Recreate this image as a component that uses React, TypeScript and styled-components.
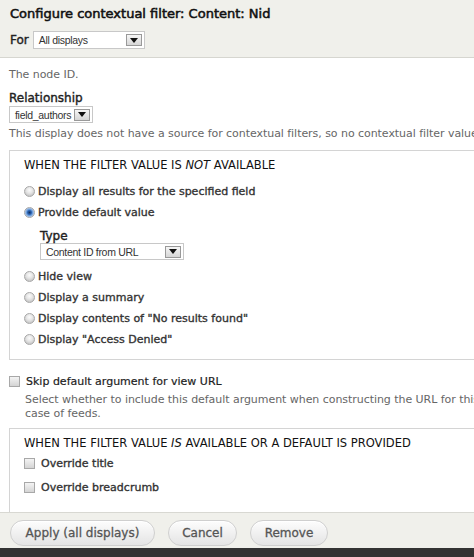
import React from 'react';
import styled, { createGlobalStyle } from 'styled-components';

const GlobalStyle = createGlobalStyle`
  html, body { margin: 0; padding: 0; background: #fff; }
  body { font-family: "DejaVu Sans", Verdana, sans-serif; color: #333; }
`;

// Lucida-style bold: thicken the strokes without widening the letters
const heavy = (w: number) => `-webkit-text-stroke: ${w}px currentColor;`;

const Page = styled.div`
  width: 474px;
  height: 557px;
  display: flex;
  flex-direction: column;
  overflow: hidden;
`;

const Header = styled.div`
  background: #f0f0eb;
  border-bottom: 1px solid #d6d6d0;
  padding: 6px 10px 0;
  height: 51px;
`;

const Title = styled.h1`
  margin: 0;
  font-size: 13px;
  line-height: 16px;
  font-weight: normal;
  ${heavy(0.55)}
  color: #111;
  white-space: nowrap;
`;

const ForRow = styled.div`
  display: flex;
  align-items: center;
  gap: 4px;
  margin-top: 9px;
  font-size: 12px;
  ${heavy(0.4)}
  color: #222;
`;

const Content = styled.div`
  flex: 1;
  overflow: hidden;
  padding: 10px 0 0 9px;
  white-space: nowrap;
`;

const Description = styled.div<{ indent?: number; mt?: number }>`
  font-size: 11px;
  color: #666;
  line-height: 14px;
  padding-left: ${p => p.indent || 0}px;
  margin-top: ${p => p.mt || 0}px;
  letter-spacing: -0.05px;
`;

const FieldLabel = styled.div`
  font-size: 12px;
  ${heavy(0.4)}
  color: #222;
  margin: 9px 0 1px;
  line-height: 14px;
`;

const SelectBox = styled.div<{ w: number; h: number }>`
  width: ${p => p.w}px;
  height: ${p => p.h}px;
  box-sizing: border-box;
  background: #fff;
  border: 1px solid #c8c8c8;
  display: flex;
  align-items: center;
  justify-content: space-between;
  padding: 0 2px 0 5px;
  font-family: "Liberation Sans", Arial, sans-serif;
  font-size: 10.5px;
  color: #333;
  letter-spacing: -0.3px;
  -webkit-text-stroke: 0;
`;

const SelectArrow = styled.span`
  width: 16px;
  height: 12px;
  box-sizing: border-box;
  border: 1px solid #999;
  background: linear-gradient(#f6f6f6, #d6d6d6);
  display: flex;
  align-items: center;
  justify-content: center;
  &::after {
    content: "";
    border-left: 4px solid transparent;
    border-right: 4px solid transparent;
    border-top: 5px solid #111;
  }
`;

function Select({ value, width, height = 17 }: { value: string; width: number; height?: number }) {
  return (
    <SelectBox w={width} h={height}>
      <span>{value}</span>
      <SelectArrow />
    </SelectBox>
  );
}

const Fieldset = styled.div<{ pb: number; mt: number }>`
  border: 1px solid #d4d4d4;
  border-right: none;
  padding: 6px 0 ${p => p.pb}px 14px;
  margin-top: ${p => p.mt}px;
`;

const Legend = styled.div<{ mb: number }>`
  font-size: 11.5px;
  color: #111;
  line-height: 16px;
  margin-bottom: ${p => p.mb}px;
  em { font-style: italic; }
`;

const OptionRow = styled.label<{ h?: number }>`
  display: flex;
  align-items: center;
  gap: 3px;
  height: ${p => p.h || 21}px;
  font-size: 11px;
  ${heavy(0.35)}
  color: #333;
`;

const Radio = styled.span<{ checked?: boolean }>`
  width: 11px;
  height: 11px;
  border-radius: 50%;
  box-sizing: border-box;
  border: 1px solid #a8a8a8;
  -webkit-text-stroke: 0;
  background: ${p =>
    p.checked
      ? 'radial-gradient(circle at 50% 50%, #10305e 0, #2c64b4 2px, #6a9bd8 3px, #c7d7ee 5px)'
      : 'radial-gradient(circle at 50% 35%, #fbfbfb 0, #e6e6e6 3px, #c4c4c4 6px)'};
`;

const Check = styled.span`
  width: 11px;
  height: 11px;
  box-sizing: border-box;
  border: 1px solid #a8a8a8;
  background: linear-gradient(#f4f4f4, #d4d4d4);
  margin-right: 3px;
`;

const TypeBlock = styled.div`
  padding-left: 16px;
  margin: 6px 0 6px;
`;

const TypeLabel = styled.div`
  font-size: 12px;
  ${heavy(0.4)}
  color: #222;
  line-height: 14px;
`;

const SkipRow = styled.label`
  display: flex;
  align-items: center;
  gap: 3px;
  height: 20px;
  margin-top: 11px;
  font-size: 11px;
  ${heavy(0.2)}
  color: #222;
`;

const Footer = styled.div`
  background: #f0f0eb;
  border-top: 1px solid #d8d8d2;
  height: 36px;
  display: flex;
  align-items: flex-start;
  gap: 13px;
  padding: 7px 0 0 10px;
  box-sizing: border-box;
`;

const Button = styled.button<{ w: number }>`
  width: ${p => p.w}px;
  height: 26px;
  border-radius: 13px;
  border: 1px solid #cfcfcf;
  background: linear-gradient(#fdfdfd, #e4e4e4);
  font-family: "DejaVu Sans", Verdana, sans-serif;
  font-size: 12px;
  ${heavy(0.3)}
  color: #555;
  padding: 0;
  box-shadow: inset 0 1px 0 #fff;
`;

const DarkBar = styled.div`
  height: 9px;
  background: #333;
`;

const firstOptions = [
  'Display all results for the specified field',
  'Provide default value',
];

const restOptions = [
  'Hide view',
  'Display a summary',
  'Display contents of "No results found"',
  'Display "Access Denied"',
];

export default function App() {
  return (
    <Page>
      <GlobalStyle />
      <Header>
        <Title>Configure contextual filter: Content: Nid</Title>
        <ForRow>
          For
          <Select value="All displays" width={112} height={18} />
        </ForRow>
      </Header>
      <Content>
        <Description>The node ID.</Description>
        <FieldLabel>Relationship</FieldLabel>
        <Select value="field_authors" width={84} />
        <Description mt={4}>
          This display does not have a source for contextual filters, so no contextual filter value will be available
        </Description>

        <Fieldset pb={9} mt={9}>
          <Legend mb={8}>
            WHEN THE FILTER VALUE IS <em>NOT</em> AVAILABLE
          </Legend>
          {firstOptions.map((o, i) => (
            <OptionRow key={o}>
              <Radio checked={i === 1} />
              {o}
            </OptionRow>
          ))}
          <TypeBlock>
            <TypeLabel>Type</TypeLabel>
            <Select value="Content ID from URL" width={144} />
          </TypeBlock>
          {restOptions.map(o => (
            <OptionRow key={o}>
              <Radio />
              {o}
            </OptionRow>
          ))}
        </Fieldset>

        <SkipRow>
          <Check />
          Skip default argument for view URL
        </SkipRow>
        <Description indent={16} mt={2}>
          Select whether to include this default argument when constructing the URL for this view. Skipping default
          <br />
          case of feeds.
        </Description>

        <Fieldset pb={20} mt={7}>
          <Legend mb={0}>
            WHEN THE FILTER VALUE <em>IS</em> AVAILABLE OR A DEFAULT IS PROVIDED
          </Legend>
          <OptionRow h={24}>
            <Check />
            Override title
          </OptionRow>
          <OptionRow h={24}>
            <Check />
            Override breadcrumb
          </OptionRow>
        </Fieldset>
      </Content>
      <Footer>
        <Button w={145}>Apply (all displays)</Button>
        <Button w={69}>Cancel</Button>
        <Button w={78}>Remove</Button>
      </Footer>
      <DarkBar />
    </Page>
  );
}
